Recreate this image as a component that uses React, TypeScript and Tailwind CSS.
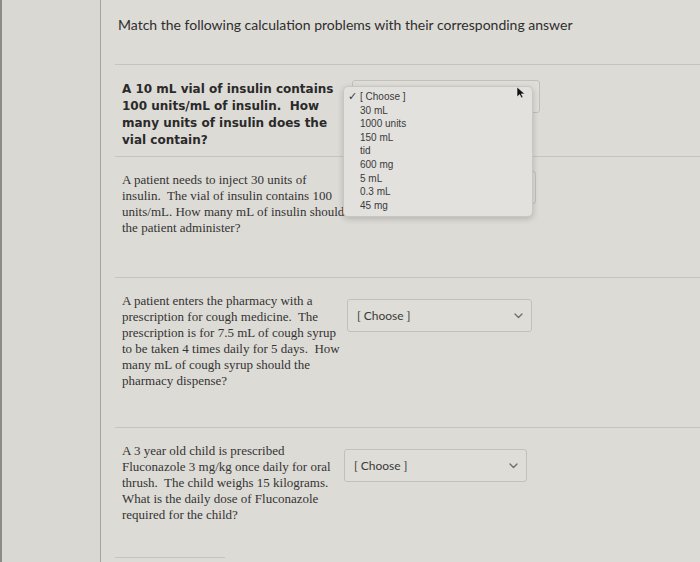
import type React from "react";

type Question = {
	text: string;
	bold?: boolean;
	covered?: boolean;
	height: string;
	selectTop: string;
	selectLeft: string;
	selectWidth: string;
};

const options = [
	"30 mL",
	"1000 units",
	"150 mL",
	"tid",
	"600 mg",
	"5 mL",
	"0.3 mL",
	"45 mg",
];

const questions: Question[] = [
	{
		text: "A 10 mL vial of insulin contains 100 units/mL of insulin.  How many units of insulin does the vial contain?",
		bold: true,
		covered: true,
		height: "h-[92px]",
		selectTop: "mt-[15px]",
		selectLeft: "ml-[4px]",
		selectWidth: "w-[188px]",
	},
	{
		text: "A patient needs to inject 30 units of insulin.  The vial of insulin contains 100 units/mL. How many mL of insulin should the patient administer?",
		covered: true,
		height: "h-[121px]",
		selectTop: "mt-[14px]",
		selectLeft: "ml-[4px]",
		selectWidth: "w-[184px]",
	},
	{
		text: "A patient enters the pharmacy with a prescription for cough medicine.  The prescription is for 7.5 mL of cough syrup to be taken 4 times daily for 5 days.  How many mL of cough syrup should the pharmacy dispense?",
		height: "h-[150px]",
		selectTop: "mt-[21px]",
		selectLeft: "ml-[-1px]",
		selectWidth: "w-[185px]",
	},
	{
		text: "A 3 year old child is prescribed Fluconazole 3 mg/kg once daily for oral thrush.  The child weighs 15 kilograms.  What is the daily dose of Fluconazole required for the child?",
		height: "h-[130px]",
		selectTop: "mt-[21px]",
		selectLeft: "ml-[-4px]",
		selectWidth: "w-[183px]",
	},
];

const Chevron: React.FC = () => (
	<svg width="9" height="6" viewBox="0 0 9 6" fill="none">
		<path
			d="M1 1l3.5 3.5L8 1"
			stroke="#6b6b6b"
			strokeWidth="1.3"
			strokeLinecap="round"
			strokeLinejoin="round"
		/>
	</svg>
);

// the open menu hides the label of the first two selects
const SelectBox: React.FC<{ q: Question }> = ({ q }) => (
	<div
		className={`${q.selectTop} ${q.selectLeft} ${q.selectWidth} h-[33px] flex items-center justify-between pl-[9px] pr-[8px] border border-[#c2c0bb] rounded-[3px] bg-[#dfddd8] font-['Lato',sans-serif] text-[12px] text-[#3a3a3a]`}
	>
		<span>{q.covered ? "" : "[ Choose ]"}</span>
		<Chevron />
	</div>
);

const QuestionRow: React.FC<{ q: Question }> = ({ q }) => (
	<div className={`flex border-t border-[#c6c4bf] ${q.height}`}>
		<div
			className={`ml-[7px] w-[226px] shrink-0 whitespace-pre-wrap ${
				q.bold
					? "pt-[16px] font-['DejaVu_Sans',sans-serif] font-bold text-[12px] leading-[17px] text-[#2a2a2a]"
					: "pt-[15px] font-['Liberation_Serif',serif] text-[13px] leading-[16px] text-[#333]"
			}`}
		>
			{q.text}
		</div>
		<SelectBox q={q} />
	</div>
);

const DropdownMenu: React.FC = () => (
	<div className="absolute left-[343px] top-[86px] w-[190px] h-[131px] rounded-[5px] border border-[#c9c7c2] bg-[#e2e1de] shadow-[0_2px_6px_rgba(0,0,0,0.18)] pt-[3px] font-['Liberation_Sans',sans-serif] text-[10px] leading-[13.6px] text-[#3a3a3a]">
		<div className="flex">
			<span className="w-[16px] pl-[4px] text-[11px]">✓</span>
			<span>[ Choose ]</span>
		</div>
		{options.map((option) => (
			<div key={option} className="pl-[16px]">
				{option}
			</div>
		))}
	</div>
);

const Cursor: React.FC = () => (
	<svg
		className="absolute left-[516px] top-[86px]"
		width="10"
		height="13"
		viewBox="0 0 10 13"
	>
		<path
			d="M1 1v10l2.6-2.4L5.5 12l1.6-.8-1.8-3.3H8.8z"
			fill="#111"
			stroke="#eee"
			strokeWidth="0.6"
		/>
	</svg>
);

export default function App() {
	return (
		<div className="relative flex w-[700px] h-[562px] overflow-hidden bg-[#dddbd6]">
			<div className="w-[101px] shrink-0 border-l-2 border-l-[#8c8b87] border-r border-r-[#a6a5a0] bg-[#dad8d3]" />
			<div className="flex-1 pl-[14px]">
				<div className="h-[64px] pl-[3px] pt-[14px] font-['Lato',sans-serif] text-[14px] text-[#2e2e2e]">
					Match the following calculation problems with their corresponding
					answer
				</div>
				{questions.map((q) => (
					<QuestionRow key={q.text} q={q} />
				))}
				<div className="w-[110px] border-t border-[#c6c4bf]" />
			</div>
			<DropdownMenu />
			<Cursor />
		</div>
	);
}
